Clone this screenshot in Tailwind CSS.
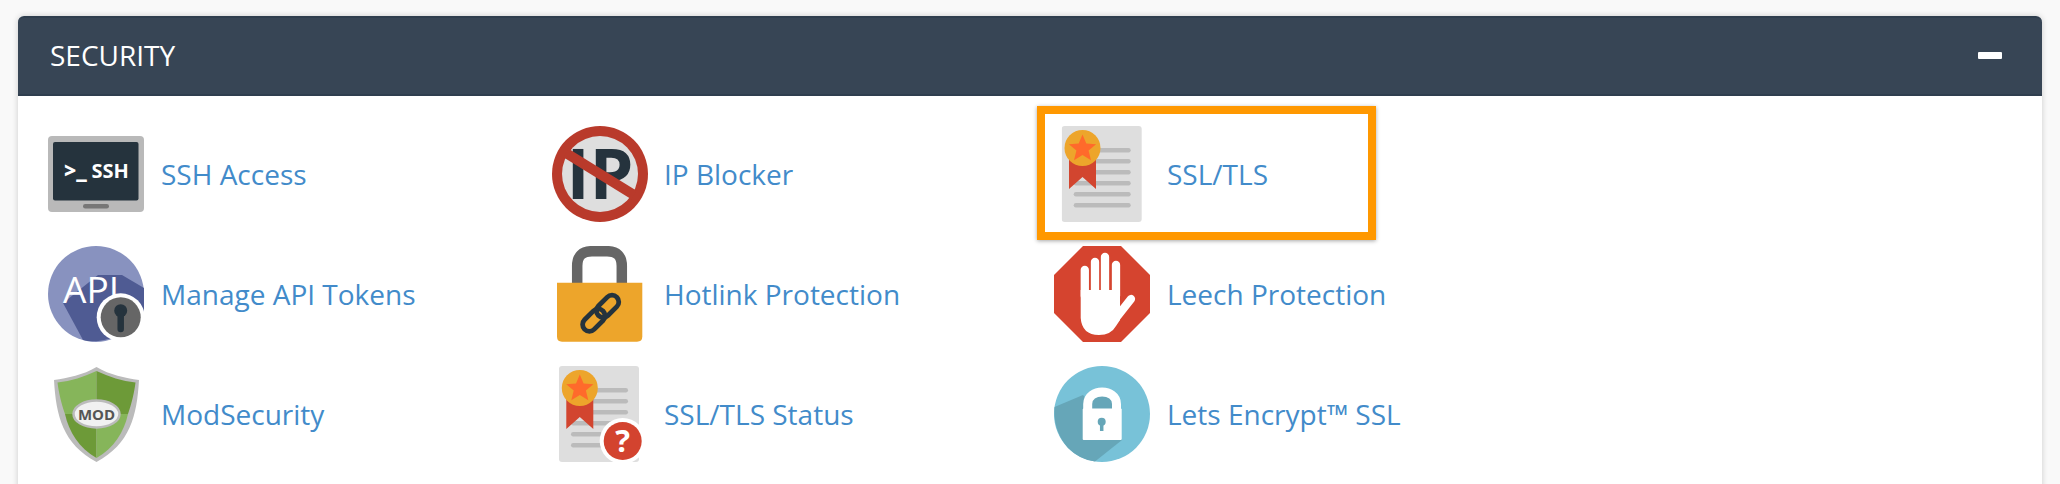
<!DOCTYPE html>
<html lang="en">
<head>
    <meta charset="UTF-8">
    <meta name="viewport" content="width=device-width, initial-scale=1.0">
    <title>Security</title>
    <script src="https://cdn.jsdelivr.net/npm/@tailwindcss/browser@4"></script>
</head>
<body class="bg-[#f9f9f9] h-[484px] overflow-hidden font-['Open_Sans',sans-serif]">
    <!-- shared certificate drawing, used by SSL/TLS and SSL/TLS Status -->
    <svg class="hidden">
        <symbol id="cert" viewBox="0 0 96 96">
            <rect x="0" y="0" width="80" height="96" rx="3" fill="#dedede"/>
            <g fill="#bbbbbb">
                <rect x="12" y="22" width="57" height="4.5" rx="2.2"/>
                <rect x="12" y="33" width="57" height="4.5" rx="2.2"/>
                <rect x="12" y="44" width="57" height="4.5" rx="2.2"/>
                <rect x="12" y="55" width="57" height="4.5" rx="2.2"/>
                <rect x="12" y="66" width="57" height="4.5" rx="2.2"/>
                <rect x="12" y="77" width="57" height="4.5" rx="2.2"/>
            </g>
            <path d="M7.3 24H34.3V63L20.8 51L7.3 63Z" fill="#d2452f"/>
            <circle cx="20.8" cy="22" r="18" fill="#eda52b"/>
            <path d="M20.8 8.5L24.6 17.6L34.4 18.3L26.9 24.6L29.3 34.2L20.8 29L12.3 34.2L14.7 24.6L7.2 18.3L17 17.6Z" fill="#ff6a2b"/>
        </symbol>
    </svg>

    <div class="pt-4 px-[18px]">
        <section class="bg-white rounded-t-md shadow-[0_0_6px_rgba(0,0,0,0.18)] h-[480px]">
            <header class="h-20 px-8 flex items-center justify-between bg-[#374555] border-y-2 border-[#2f3e4e] rounded-t-md">
                <h2 class="text-white text-[28px] leading-none pb-[2px]">SECURITY</h2>
                <div class="w-6 h-[7px] bg-white rounded-[1px] mr-2 mb-[1px]"></div>
            </header>

            <div class="grid grid-cols-[504px_502px_1fr] auto-rows-[120px] pl-[30px] pt-[18px] text-[28px] text-[#428bca]">
                <a class="flex items-center gap-[17px]">
                    <svg class="w-24 h-24 shrink-0" viewBox="0 0 96 96">
                        <rect x="0" y="10" width="96" height="76" rx="4" fill="#b9b9b9"/>
                        <rect x="5" y="16" width="85.5" height="58.5" rx="2" fill="#25333d"/>
                        <rect x="35" y="78" width="26" height="4.5" rx="2.2" fill="#777777"/>
                        <text x="16" y="52" font-size="21" font-weight="800" fill="#ffffff" font-family="Open Sans">&gt;_</text>
                        <text x="43.5" y="52" font-size="20" font-weight="700" fill="#ffffff" font-family="Open Sans">SSH</text>
                    </svg>
                    <span class="mb-[1px]">SSH Access</span>
                </a>
                <a class="flex items-center gap-[16px]">
                    <svg class="w-24 h-24 shrink-0 overflow-visible" viewBox="0 0 96 96">
                        <circle cx="48" cy="48" r="48" fill="#b93a2b"/>
                        <circle cx="48" cy="48" r="38" fill="#dedede"/>
                        <text x="48" y="73" text-anchor="middle" font-size="70" font-weight="700" fill="#25333d" font-family="Open Sans">IP</text>
                        <path d="M14 27L82 69" stroke="#b93a2b" stroke-width="10"/>
                    </svg>
                    <span class="mb-[1px]">IP Blocker</span>
                </a>
                <a class="relative flex items-center gap-[17px]">
                    <svg class="w-24 h-24 shrink-0" viewBox="0 0 96 96"><use href="#cert" x="7.7" width="96" height="96"/></svg>
                    <span class="mb-[1px]">SSL/TLS</span>
                    <div class="absolute -left-[17px] -top-2 w-[339px] h-[134px] border-8 border-[#ff9800] shadow-[0_1px_4px_rgba(0,0,0,0.35)]"></div>
                </a>

                <a class="flex items-center gap-[17px]">
                    <svg class="w-24 h-24 shrink-0" viewBox="0 0 96 96">
                        <circle cx="48" cy="48" r="48" fill="#8892bf"/>
                        <path d="M15 57L35 94Q48 98 70 90L96 70V42L74 29H50Z" fill="#4f5b93"/>
                        <text x="15" y="57" font-size="37" fill="#ffffff" font-family="Open Sans">API</text>
                        <circle cx="72.7" cy="71.3" r="24" fill="#ffffff"/>
                        <circle cx="72.7" cy="71.3" r="20" fill="#666666"/>
                        <circle cx="72.7" cy="64.7" r="6.5" fill="#25333d"/>
                        <path d="M72.7 66V83" stroke="#25333d" stroke-width="6.5" stroke-linecap="round"/>
                    </svg>
                    <span class="mb-[1px]">Manage API Tokens</span>
                </a>
                <a class="flex items-center gap-[16px]">
                    <svg class="w-24 h-24 shrink-0" viewBox="0 0 96 96">
                        <path d="M25.2 37V20Q25.2 5.2 40 5.2H55Q69.800 5.2 69.800 20V37" fill="none" stroke="#666666" stroke-width="10.500"/>
                        <path d="M5 36.700H90.300V90.500Q90.300 95.700 85 95.700H10Q5 95.700 5 90.500Z" fill="#eda52b"/>
                        <g fill="none" stroke="#25333d" stroke-width="4.800" transform="rotate(-45 48.700 67.300)">
                            <rect x="26" y="60.500" width="26" height="13.500" rx="6.700"/>
                            <rect x="45.500" y="60.500" width="26" height="13.500" rx="6.700"/>
                        </g>
                    </svg>
                    <span class="mb-[1px]">Hotlink Protection</span>
                </a>
                <a class="flex items-center gap-[17px]">
                    <svg class="w-24 h-24 shrink-0" viewBox="0 0 96 96">
                        <path d="M29 0H67L96 29V67L67 96H29L0 67V29Z" fill="#d5442f"/>
                        <g stroke="#ffffff" stroke-width="8.300" stroke-linecap="round" fill="none">
                            <path d="M30.800 24V50"/>
                            <path d="M41 16V50"/>
                            <path d="M51 11V50"/>
                            <path d="M62 19V50"/>
                            <path d="M62 72L77 53"/>
                        </g>
                        <path d="M26.700 44H66V74L62 80Q57 89 45 89Q28 89 26.700 72Z" fill="#ffffff"/>
                    </svg>
                    <span class="mb-[1px]">Leech Protection</span>
                </a>

                <a class="flex items-center gap-[17px]">
                    <svg class="w-24 h-24 shrink-0" viewBox="0 0 96 96">
                        <path d="M48.500 1C35 9 20 12 6 14C8 50 15 78 48.500 96C82 78 89 50 91 14C77 12 62 9 48.500 1Z" fill="#bbbbbb"/>
                        <path d="M48.500 5V48H17C13 36 11 28 9.500 16.500C23 15 36 11 48.500 5Z" fill="#86b55a"/>
                        <path d="M48.500 5C61 11 74 15 87.500 16.500C86 28 84 36 80 48H48.500Z" fill="#6d9a38"/>
                        <path d="M17 48H48.500V92C31 82 21 66 17 48Z" fill="#6d9a38"/>
                        <path d="M48.500 48H80C76 66 66 82 48.500 92Z" fill="#86b55a"/>
                        <ellipse cx="48.500" cy="48" rx="23" ry="13.500" fill="#f1f1f1" stroke="#bbbbbb" stroke-width="2.500"/>
                        <text x="48.500" y="53.500" text-anchor="middle" font-size="15" font-weight="700" fill="#555555" font-family="Open Sans">MOD</text>
                    </svg>
                    <span class="mb-[1px]">ModSecurity</span>
                </a>
                <a class="flex items-center gap-[16px]">
                    <svg class="w-24 h-24 shrink-0" viewBox="0 0 96 96">
                        <use href="#cert" x="7" width="96" height="96"/>
                        <circle cx="70.700" cy="75" r="23" fill="#ffffff"/>
                        <circle cx="70.700" cy="75" r="19" fill="#d3432f"/>
                        <text x="70.700" y="86" text-anchor="middle" font-size="31" font-weight="700" fill="#ffffff" font-family="Open Sans">?</text>
                    </svg>
                    <span class="mb-[1px]">SSL/TLS Status</span>
                </a>
                <a class="flex items-center gap-[17px]">
                    <svg class="w-24 h-24 shrink-0" viewBox="0 0 96 96">
                        <circle cx="48" cy="48" r="48" fill="#78c2d8"/>
                        <path d="M29 29L0.500 41Q-1 65 14 82Q26 94 41 95.500L68 74Z" fill="#66a6b8"/>
                        <path d="M33.700 46V38C33.700 22 62.500 22 62.500 38V46" fill="#66a6b8" stroke="#ffffff" stroke-width="9"/>
                        <rect x="28.700" y="42.500" width="39" height="31.500" rx="1" fill="#ffffff"/>
                        <circle cx="47.700" cy="55.700" r="4" fill="#66a6b8"/>
                        <path d="M47.700 56V65" stroke="#66a6b8" stroke-width="3.500"/>
                    </svg>
                    <span class="mb-[1px]">Lets Encrypt™ SSL</span>
                </a>
            </div>
        </section>
    </div>
</body>
</html>
